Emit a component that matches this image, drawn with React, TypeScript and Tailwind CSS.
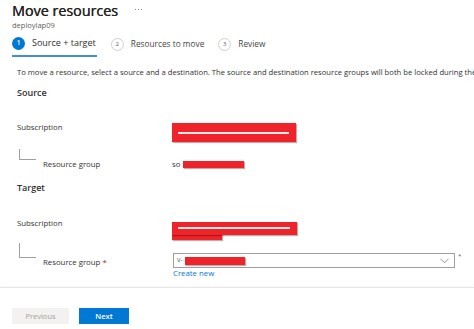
import React from 'react'

function Redact({ w, h, line }: { w: number; h: number; line?: boolean }) {
	return (
		<div className="relative" style={{ width: w, height: h }}>
			<div className="absolute inset-0 bg-[#f0232a] shadow-[1px_1px_1px_rgba(0,0,0,0.3)]" />
			{line && <div className="absolute left-[6px] right-[7px] top-[45%] h-[2px] bg-white/90" />}
		</div>
	)
}

export default function App() {
	return (
		<div className="w-[474px] h-[329px] overflow-hidden bg-white text-[#323130] flex flex-col" style={{ fontFamily: '"Open Sans", "Noto Sans", sans-serif' }}>
			{/* Header */}
			<div className="h-[57px] pl-[12px] flex flex-col">
				<div className="flex items-center h-[21px]">
					<h1 className="text-[14.3px] leading-[21px] font-normal text-[#252423] whitespace-nowrap [text-shadow:0.3px_0_0_#252423]">Move resources</h1>
					<div className="ml-[17px] -mt-[3px] flex gap-[2px]">
						<span className="w-[1px] h-[1px] bg-[#8a8886]" />
						<span className="w-[1px] h-[1px] bg-[#8a8886]" />
						<span className="w-[1px] h-[1px] bg-[#8a8886]" />
					</div>
				</div>
				<p className="text-[7.5px] leading-[9px] text-[#605e5c]">deploylap09</p>
				<div className="flex items-end mt-[4px] h-[23px]">
					<div className="flex items-center gap-[7px] h-[23px] pb-[3px] border-b-[2px] border-[#3f8fd2]">
						<span className="w-[13px] h-[13px] rounded-full bg-[#0078d4] text-white text-[6.5px] font-semibold flex items-center justify-center">1</span>
						<span className="text-[9px] whitespace-nowrap pr-[1px]">Source + target</span>
					</div>
					<div className="flex items-center gap-[7px] h-[23px] pb-[3px] ml-[14px]">
						<span className="w-[13px] h-[13px] rounded-full border border-[#d2d0ce] text-[#605e5c] text-[6px] flex items-center justify-center">2</span>
						<span className="text-[8.3px] text-[#484644] whitespace-nowrap">Resources to move</span>
					</div>
					<div className="flex items-center gap-[7px] h-[23px] pb-[3px] ml-[14px]">
						<span className="w-[13px] h-[13px] rounded-full border border-[#d2d0ce] text-[#605e5c] text-[6px] flex items-center justify-center">3</span>
						<span className="text-[8.3px] text-[#484644]">Review</span>
					</div>
				</div>
			</div>

			{/* Body */}
			<div className="pl-[17px] flex flex-col">
				<p className="mt-[10px] h-[10px] text-[7.65px] leading-[10px] whitespace-nowrap">
					To move a resource, select a source and a destination. The source and destination resource groups will both be locked during the move.
				</p>
				<h2 className="mt-[11px] h-[10px] text-[9px] leading-[10px] font-semibold">Source</h2>

				<div className="mt-[24px] h-[20px] flex items-start">
					<span className="w-[155px] text-[7.8px] leading-[10px]">Subscription</span>
					<div className="mt-[1px]"><Redact w={124} h={19} line /></div>
				</div>
				<div className="mt-[17px] h-[10px] flex items-start">
					<div className="-mt-[10px] ml-[2px] w-[17px] h-[11px] border-l border-b border-[#a19f9d]" />
					<span className="ml-[7px] w-[129px] text-[7.8px] leading-[10px]">Resource group</span>
					<div className="flex items-center h-[10px]">
						<span className="text-[7.8px] leading-[10px]">so</span>
						<div className="ml-[3px]"><Redact w={61} h={7} /></div>
					</div>
				</div>

				<h2 className="mt-[14px] h-[10px] text-[9px] leading-[10px] font-semibold">Target</h2>

				<div className="mt-[25px] h-[10px] flex items-start">
					<span className="w-[155px] text-[7.8px] leading-[10px]">Subscription</span>
					<div className="mt-[4px] relative w-[125px] h-[18px]">
						<div className="absolute left-0 top-[6px] w-[50px] h-[12px] bg-[#f0232a] shadow-[1px_1px_1px_rgba(0,0,0,0.3)]" />
						<div className="absolute left-0 top-0 w-[125px] h-[13px] bg-[#f0232a] shadow-[1px_1px_1px_rgba(0,0,0,0.3)]" />
						<div className="absolute left-[6px] right-[7px] top-[5px] h-[2px] bg-white/90" />
					</div>
				</div>
				<div className="mt-[29px] h-[10px] flex items-start">
					<div className="-mt-[14px] ml-[2px] w-[17px] h-[15px] border-l border-b border-[#a19f9d]" />
					<span className="ml-[7px] w-[130px] text-[7.8px] leading-[10px]">
						Resource group <span className="text-[#a4262c]">*</span>
					</span>
					<div className="flex flex-col -mt-[4px]">
						<div className="flex items-start">
							<div className="w-[282px] h-[15px] border border-[#a19f9d] flex items-center pl-[3px] pr-[5px]">
								<span className="text-[7px] text-[#605e5c]">v-</span>
								<div className="ml-[2px]"><Redact w={60} h={8} /></div>
								<svg className="ml-auto" width="9" height="6" viewBox="0 0 9 6" fill="none">
									<path d="M0.5 0.8 L4.5 4.8 L8.5 0.8" stroke="#8a8886" strokeWidth="0.9" />
								</svg>
							</div>
							<span className="ml-[3px] text-[6px] leading-[6px] text-[#605e5c]">*</span>
						</div>
						<span className="text-[7.8px] leading-[10px] text-[#0078d4]">Create new</span>
					</div>
				</div>
			</div>

			{/* Footer */}
			<div className="mt-auto h-[42px] border-t border-[#e8e6e4] shadow-[0_-1px_2px_rgba(0,0,0,0.04)] flex items-start gap-[10px] pl-[12px] pt-[20px]">
				<button className="w-[57px] h-[16px] bg-[#f3f2f1] text-[#a19f9d] text-[7.5px] leading-[16px]">Previous</button>
				<button className="w-[50px] h-[16px] bg-[#0078d4] text-white text-[7.5px] leading-[16px] font-semibold">Next</button>
			</div>
		</div>
	)
}
